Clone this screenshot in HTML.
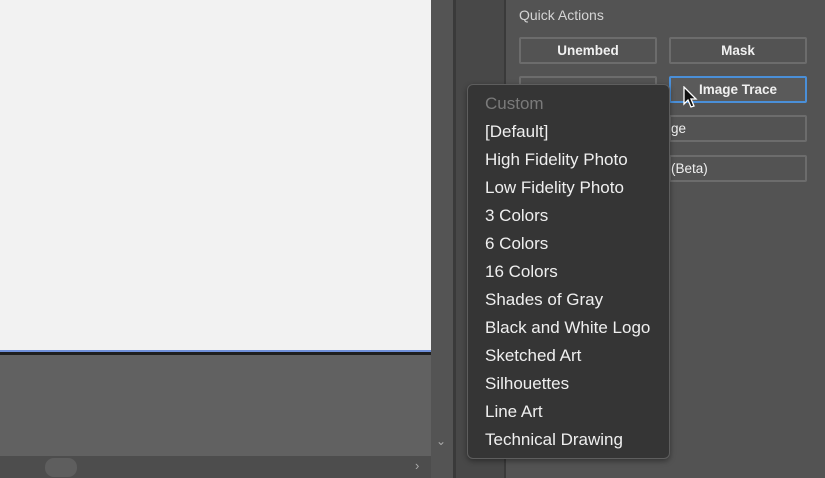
<!DOCTYPE html>
<html><head><style>
body{margin:0;width:825px;height:478px;overflow:hidden;background:#535353;position:relative;font-family:"Liberation Sans",sans-serif}
div{position:absolute;box-sizing:border-box}
.btn{border:2px solid #6c6c6c;border-radius:2px;background:#535353;color:#f0f0f0;font-size:13.5px;font-weight:bold;text-align:center;line-height:24px;height:27px}
.mi{position:absolute;left:17px;font-size:17px;color:#efefef;white-space:nowrap}
</style></head><body>
<div style="left:0;top:0;width:431px;height:351px;background:#f2f2f2"></div>
<div style="left:0;top:350px;width:431px;height:2px;background:#6f8fd8"></div>
<div style="left:0;top:352px;width:431px;height:3px;background:#1e1e1e"></div>
<div style="left:0;top:355px;width:431px;height:101px;background:#616161"></div>
<div style="left:0;top:456px;width:431px;height:22px;background:#4d4d4d"></div>
<div style="left:45px;top:458px;width:32px;height:19px;border-radius:9px;background:#5e5e5e"></div>
<div style="left:415px;top:458px;color:#aaa;font-size:13px">›</div>
<div style="left:431px;top:0;width:22px;height:478px;background:#545454"></div>
<div style="left:436px;top:434px;color:#aaa;font-size:12px">⌄</div>
<div style="left:453px;top:0;width:3px;height:478px;background:#3a3a3a"></div>
<div style="left:456px;top:0;width:48px;height:478px;background:#484848"></div>
<div style="left:504px;top:0;width:2px;height:478px;background:#3a3a3a"></div>
<div style="left:519px;top:7px;color:#d4d4d4;font-size:14px">Quick Actions</div>
<div class="btn" style="left:519px;top:37px;width:138px">Unembed</div>
<div class="btn" style="left:669px;top:37px;width:138px">Mask</div>
<div class="btn" style="left:519px;top:76px;width:138px"></div>
<div class="btn" style="left:669px;top:76px;width:138px;border-color:#4a8fd8;background:#5a5a5a">Image Trace</div>
<div class="btn" style="left:519px;top:115px;width:138px"></div>
<div class="btn" style="left:669px;top:115px;width:138px;text-align:left;font-weight:normal">ge</div>
<div class="btn" style="left:519px;top:155px;width:138px"></div>
<div class="btn" style="left:669px;top:155px;width:138px;text-align:left;font-weight:normal">(Beta)</div>
<svg style="position:absolute;left:683px;top:86px" width="16" height="24" viewBox="0 0 16 24"><path d="M1 1 L1 18 L5 14 L8 21 L11 20 L8 13 L13 13 Z" fill="#111" stroke="#fff" stroke-width="1.3"/></svg>
<div style="left:467px;top:84px;width:203px;height:375px;background:#353535;border:1px solid #5e5e5e;border-radius:6px;box-shadow:0 2px 6px rgba(0,0,0,.4)">
<span class="mi" style="top:9px;color:#7a7a7a">Custom</span>
<span class="mi" style="top:37px">[Default]</span>
<span class="mi" style="top:65px">High Fidelity Photo</span>
<span class="mi" style="top:93px">Low Fidelity Photo</span>
<span class="mi" style="top:121px">3 Colors</span>
<span class="mi" style="top:149px">6 Colors</span>
<span class="mi" style="top:177px">16 Colors</span>
<span class="mi" style="top:205px">Shades of Gray</span>
<span class="mi" style="top:233px">Black and White Logo</span>
<span class="mi" style="top:261px">Sketched Art</span>
<span class="mi" style="top:289px">Silhouettes</span>
<span class="mi" style="top:317px">Line Art</span>
<span class="mi" style="top:345px">Technical Drawing</span>
</div>
</body></html>
